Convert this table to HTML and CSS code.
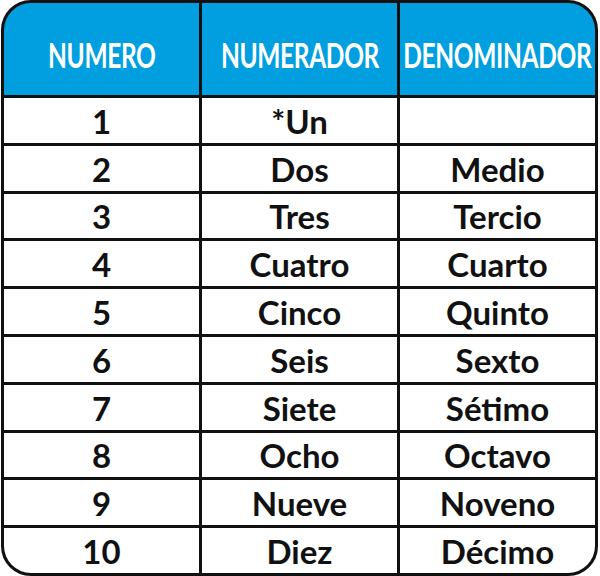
FILE: index.html
```html
<!DOCTYPE html>
<html lang="es">
<head>
<meta charset="utf-8">
<link rel="stylesheet" href="styles.css">
</head>
<body>
<div class="table">
  <div class="th"><span>NUMERO</span></div>
  <div class="th"><span>NUMERADOR</span></div>
  <div class="th"><span>DENOMINADOR</span></div>

  <div class="td">1</div><div class="td">*Un</div><div class="td"></div>
  <div class="td">2</div><div class="td">Dos</div><div class="td">Medio</div>
  <div class="td">3</div><div class="td">Tres</div><div class="td">Tercio</div>
  <div class="td">4</div><div class="td">Cuatro</div><div class="td">Cuarto</div>
  <div class="td">5</div><div class="td">Cinco</div><div class="td">Quinto</div>
  <div class="td">6</div><div class="td">Seis</div><div class="td">Sexto</div>
  <div class="td">7</div><div class="td">Siete</div><div class="td">Sétimo</div>
  <div class="td">8</div><div class="td">Ocho</div><div class="td">Octavo</div>
  <div class="td">9</div><div class="td">Nueve</div><div class="td">Noveno</div>
  <div class="td">10</div><div class="td">Diez</div><div class="td">Décimo</div>
</div>
</body>
</html>
```
FILE: styles.css
```css
html, body {
  margin: 0;
  padding: 0;
  background: #ffffff;
}

.table {
  box-sizing: border-box;
  width: 597px;
  height: 576px;
  margin-left: 1px;
  border: 3px solid #111111;
  border-radius: 30px;
  overflow: hidden;
  background: #111111;
  display: grid;
  grid-template-columns: 195px 195px 195px;
  grid-template-rows: 92px repeat(10, 1fr);
  gap: 3px;
}

.th {
  background: #019fe0;
  color: #ffffff;
  display: flex;
  align-items: center;
  justify-content: center;
  font-family: "Lato", "Noto Sans", sans-serif;
  font-weight: 700;
  font-size: 35px;
  padding-top: 10px;
  box-sizing: border-box;
  overflow: visible;
}

.th span {
  display: inline-block;
  transform: scaleX(0.7);
  white-space: nowrap;
  letter-spacing: -0.5px;
}

.td {
  background: #ffffff;
  color: #111111;
  display: flex;
  align-items: center;
  justify-content: center;
  font-family: "Lato", "Noto Sans", sans-serif;
  font-weight: 700;
  font-size: 33px;
  line-height: 1;
  padding-top: 2px;
  box-sizing: border-box;
}
```
